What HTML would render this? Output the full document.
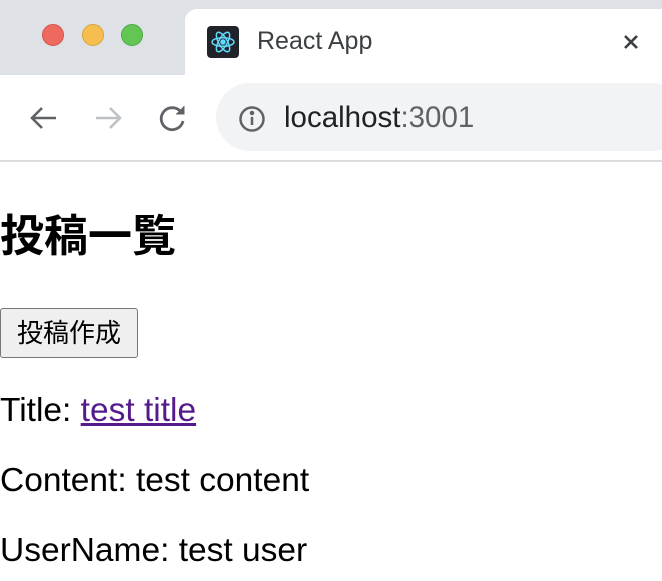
<!DOCTYPE html>
<html><head><meta charset="utf-8"><style>
body{margin:0;width:662px;height:581px;overflow:hidden;background:#fff;font-family:"Liberation Sans","Noto Sans CJK JP",sans-serif;position:relative}
.top{position:absolute;left:0;top:0;width:662px;height:76px;background:#dee1e6}
.dot{position:absolute;top:24px;width:22px;height:22px;border-radius:50%;box-sizing:border-box}
.tab{position:absolute;left:185px;top:9px;width:500px;height:70px;background:#fff;border-radius:12px 12px 0 0}
.bar{position:absolute;left:0;top:75px;width:662px;height:85px;background:#fff;border-bottom:2px solid #dadce0}
.url{position:absolute;left:216px;top:83px;width:470px;height:68px;background:#f1f3f4;border-radius:34px}
.t{position:absolute;left:0;white-space:nowrap;color:#000}
</style></head><body>
<div class="top"></div>
<div class="dot" style="left:42px;background:#ee6a5f;border:1px solid #d5554a"></div>
<div class="dot" style="left:82px;background:#f5be4f;border:1px solid #d9a43c"></div>
<div class="dot" style="left:121px;background:#62c554;border:1px solid #4fab43"></div>
<div class="tab"></div>
<div style="position:absolute;left:207px;top:26px;width:32px;height:32px;background:#20232a;border-radius:4px">
<svg width="32" height="32" viewBox="0 0 32 32" fill="none" stroke="#61dafb" stroke-width="1.5"><ellipse cx="16" cy="16" rx="11" ry="4.3"/><ellipse cx="16" cy="16" rx="11" ry="4.3" transform="rotate(60 16 16)"/><ellipse cx="16" cy="16" rx="11" ry="4.3" transform="rotate(120 16 16)"/><circle cx="16" cy="16" r="2" fill="#61dafb"/></svg></div>
<div class="t" style="left:257px;top:27px;font-size:25px;color:#3c4043">React App</div>
<svg style="position:absolute;left:622px;top:33px" width="18" height="18" viewBox="0 0 18 18" stroke="#3c4043" stroke-width="2.6"><path d="M3 3L15 15M15 3L3 15"/></svg>
<div class="bar"></div>
<div class="url"></div>
<svg style="position:absolute;left:26px;top:103px" width="34" height="30" viewBox="0 0 34 30" fill="none" stroke="#5f6368" stroke-width="2.6"><path d="M30 15H6M16 5L6 15L16 25"/></svg>
<svg style="position:absolute;left:92px;top:103px" width="34" height="30" viewBox="0 0 34 30" fill="none" stroke="#bdc1c6" stroke-width="2.6"><path d="M4 15H28M18 5L28 15L18 25"/></svg>
<svg style="position:absolute;left:156px;top:102px" width="34" height="32" viewBox="0 0 34 32" fill="none" stroke="#5f6368" stroke-width="2.8"><path d="M25 10A11 11 0 1 0 27 19"/><path d="M28 4V12H20" fill="#5f6368" stroke-width="1"/></svg>
<svg style="position:absolute;left:237px;top:104px" width="30" height="30" viewBox="0 0 30 30" fill="none" stroke="#5f6368" stroke-width="2.5"><circle cx="15" cy="15" r="11.5"/><path d="M15 13V21"/><circle cx="15" cy="9" r="1" fill="#5f6368"/></svg>
<div class="t" style="left:284px;top:101px;font-size:29.5px;color:#202124">localhost<span style="color:#5f6368">:3001</span></div>
<div class="t" style="top:210px;font-size:44px;font-weight:bold;line-height:54px">投稿一覧</div>
<div style="position:absolute;left:0;top:308px;width:136px;height:48px;background:#efefef;border:1px solid #767676;border-radius:3px;font-size:26px;line-height:48px;text-align:center">投稿作成</div>
<div class="t" style="top:392px;font-size:33.5px;line-height:38px">Title: <span style="color:#551a8b;text-decoration:underline">test title</span></div>
<div class="t" style="top:462px;font-size:33.5px;line-height:38px">Content: test content</div>
<div class="t" style="top:532px;font-size:33.5px;line-height:38px">UserName: test user</div>
</body></html>
